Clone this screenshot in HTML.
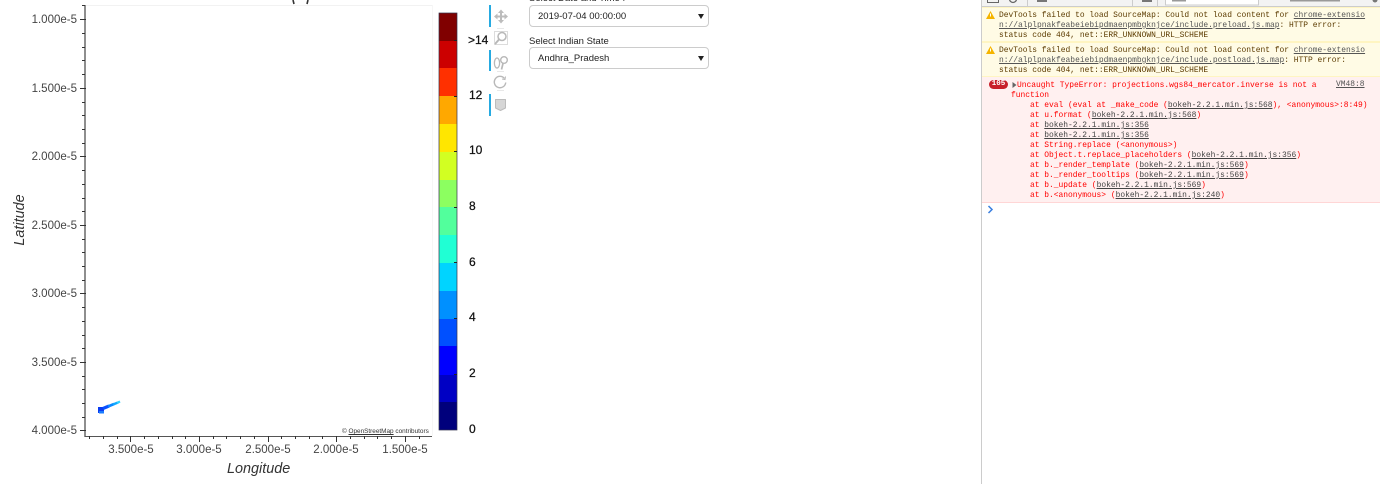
<!DOCTYPE html>
<html>
<head>
<meta charset="utf-8">
<style>
html,body{margin:0;padding:0;background:#fff;}
body{width:1380px;height:484px;overflow:hidden;position:relative;font-family:"Liberation Sans",sans-serif;}
.abs{position:absolute;white-space:nowrap;}
.yl{position:absolute;right:1303px;font-size:11.5px;color:#444;line-height:14px;white-space:nowrap;}
.xl{position:absolute;top:443px;width:80px;text-align:center;font-size:11.5px;color:#444;line-height:14px;}
.cb{position:absolute;left:469px;font-size:12px;color:#111;line-height:14px;text-align:left;white-space:nowrap;-webkit-text-stroke:.25px #111;}
.sel{position:absolute;left:529px;width:180px;height:22px;box-sizing:border-box;border:1px solid #ccc;border-radius:4px;background:#fff;font-size:9.5px;color:#222;line-height:22px;padding-left:8px;}
.sel i{position:absolute;right:4px;top:8px;width:0;height:0;border-left:3px solid transparent;border-right:3px solid transparent;border-top:5px solid #222;}
.con{position:absolute;left:982px;width:398px;font-family:"Liberation Mono","DejaVu Sans Mono",monospace;font-size:7.93px;line-height:10px;white-space:pre;}
.warn{background:#fffbe5;border-top:1px solid #fff5c2;border-bottom:1px solid #fff5c2;color:#5c3b00;box-sizing:border-box;}
.err{background:#fff0f0;color:#f00;box-sizing:border-box;border-bottom:1px solid #ffd6d6;}
.con u{color:#555;text-decoration:underline;}
.err u{color:#444;}
.tool{position:absolute;left:489px;width:2px;background:#26aae1;}
</style>
</head>
<body>

<!-- plot frame -->
<svg class="abs" style="left:0;top:0" width="480" height="484" viewBox="0 0 480 484">
  <rect x="86" y="5" width="346" height="1" fill="#f2f2f2"/>
  <rect x="432" y="5" width="1" height="431" fill="#f6f6f6"/>
  <line x1="85" y1="5" x2="85" y2="437" stroke="#444" stroke-width="1.2"/>
  <line x1="85" y1="436.5" x2="432" y2="436.5" stroke="#555" stroke-width="1.1"/>
  <path stroke="#333" stroke-width="1" fill="none" d="M80 19.5H86M80 88.5H86M80 156.5H86M80 225.5H86M80 293.5H86M80 362.5H86M80 430.5H86"/>
  <path stroke="#333" stroke-width="1" fill="none" d="M82 5.5H85M82 33.5H85M82 47.5H85M82 60.5H85M82 74.5H85M82 102.5H85M82 115.5H85M82 129.5H85M82 143.5H85M82 170.5H85M82 184.5H85M82 198.5H85M82 211.5H85M82 239.5H85M82 252.5H85M82 266.5H85M82 280.5H85M82 307.5H85M82 321.5H85M82 335.5H85M82 348.5H85M82 376.5H85M82 389.5H85M82 403.5H85M82 417.5H85"/>
  <path stroke="#333" stroke-width="1" fill="none" d="M130.5 436V442M199.5 436V442M268.5 436V442M336.5 436V442M405.5 436V442"/>
  <path stroke="#333" stroke-width="1" fill="none" d="M89.5 436V439M103.5 436V439M117.5 436V439M144.5 436V439M158.5 436V439M172.5 436V439M185.5 436V439M213.5 436V439M226.5 436V439M240.5 436V439M254.5 436V439M281.5 436V439M295.5 436V439M309.5 436V439M322.5 436V439M350.5 436V439M364.5 436V439M377.5 436V439M391.5 436V439M419.5 436V439"/>
  <!-- data -->
  <rect x="98" y="407" width="6" height="6" fill="#0a3cf0"/>
  <rect x="99" y="411" width="5" height="2.500" fill="#1a7cff"/>
  <path d="M103 408.500L109 406" stroke="#0a50ff" stroke-width="3.200" fill="none"/>
  <path d="M108 406.500L114 404" stroke="#0a88ff" stroke-width="2.800" fill="none"/>
  <path d="M113 404.500L118 402.500" stroke="#10a8ff" stroke-width="2.500" fill="none"/>
  <path d="M117 403L120 401.500" stroke="#30d0ff" stroke-width="2.200" fill="none"/>
  <!-- title fragment -->
  <path d="M293 0L294 4M308 0L307 4" stroke="#333" stroke-width="1.6"/>
  <!-- colorbar -->
  <g shape-rendering="crispEdges">
    <rect x="439" y="13" width="18" height="28" fill="#800000"/>
    <rect x="439" y="41" width="18" height="27" fill="#cc0000"/>
    <rect x="439" y="68" width="18" height="28" fill="#ff3000"/>
    <rect x="439" y="96" width="18" height="28" fill="#ffa800"/>
    <rect x="439" y="124" width="18" height="28" fill="#ffe600"/>
    <rect x="439" y="152" width="18" height="28" fill="#d2ff22"/>
    <rect x="439" y="180" width="18" height="27" fill="#8cff60"/>
    <rect x="439" y="207" width="18" height="28" fill="#52ff9c"/>
    <rect x="439" y="235" width="18" height="28" fill="#20ffd4"/>
    <rect x="439" y="263" width="18" height="28" fill="#00d4ff"/>
    <rect x="439" y="291" width="18" height="28" fill="#0090ff"/>
    <rect x="439" y="319" width="18" height="27" fill="#0050ff"/>
    <rect x="439" y="346" width="18" height="29" fill="#0000ff"/>
    <rect x="439" y="375" width="18" height="27" fill="#0000c4"/>
    <rect x="439" y="402" width="18" height="28" fill="#00007c"/>
  </g>
  <rect x="439" y="13" width="18" height="417" fill="none" stroke="#33334d" stroke-width=".7"/>
  <path stroke="#222" stroke-width="1" d="M454 40.500H457M454 96.500H457M454 151.500H457M454 207.500H457M454 262.500H457M454 318.500H457M454 374.500H457"/>
</svg>

<div class="yl" style="top:13px">1.000e-5</div>
<div class="yl" style="top:82px">1.500e-5</div>
<div class="yl" style="top:150px">2.000e-5</div>
<div class="yl" style="top:219px">2.500e-5</div>
<div class="yl" style="top:287px">3.000e-5</div>
<div class="yl" style="top:356px">3.500e-5</div>
<div class="yl" style="top:424px">4.000e-5</div>

<div class="xl" style="left:91px">3.500e-5</div>
<div class="xl" style="left:159px">3.000e-5</div>
<div class="xl" style="left:228px">2.500e-5</div>
<div class="xl" style="left:296px">2.000e-5</div>
<div class="xl" style="left:365px">1.500e-5</div>

<div class="abs" style="left:227px;top:461px;font-size:14.4px;font-style:italic;color:#333;line-height:16px">Longitude</div>
<div class="abs" style="left:-7px;top:212px;width:54px;text-align:center;font-size:14.4px;font-style:italic;color:#333;line-height:16px;transform:rotate(-90deg)">Latitude</div>

<div class="abs" style="left:342px;top:428px;font-size:6.4px;line-height:8px;color:#333;background:rgba(255,255,255,.8)">© <u>OpenStreetMap</u> contributors</div>

<div class="cb" style="top:33px;left:468px">&gt;14</div>
<div class="cb" style="top:88px">12</div>
<div class="cb" style="top:143px">10</div>
<div class="cb" style="top:199px">8</div>
<div class="cb" style="top:255px">6</div>
<div class="cb" style="top:310px">4</div>
<div class="cb" style="top:366px">2</div>
<div class="cb" style="top:422px">0</div>

<!-- toolbar -->
<div class="tool" style="top:5px;height:22px"></div>
<div class="tool" style="top:50px;height:21px"></div>
<div class="tool" style="top:94px;height:22px"></div>
<svg class="abs" style="left:492px;top:5px" width="20" height="112" viewBox="0 0 20 112">
  <!-- move -->
  <path fill="#bcbcbc" d="M9 4.500L6 8H8V10.500H5.500V8.500L2 11.500L5.500 14.500V12.500H8V15H6L9 18.500L12 15H10V12.500H12.500V14.500L16 11.500L12.500 8.500V10.500H10V8H12Z"/>
  <!-- box zoom -->
  <g fill="none" stroke="#b8b8b8">
    <rect x="2.500" y="26.500" width="13" height="13" stroke-dasharray="1 1"/>
    <circle cx="10" cy="31.500" r="4" stroke-width="1.500" fill="#fff"/>
    <path d="M7 34.500L3 39" stroke-width="2"/>
    <!-- wheel zoom -->
    <ellipse cx="5" cy="58" rx="2.600" ry="5" stroke-width="1.300"/>
    <circle cx="12" cy="55" r="3.300" stroke-width="1.400"/>
    <path d="M11 58.500L9.500 64.500" stroke-width="1.700"/>
    <!-- reset -->
    <path d="M12.500 73.500A5.700 5.700 0 1 0 13.700 77.500" stroke-width="1.400"/>
    <path d="M13.500 71.500L13 74.500L10 74" stroke-width="1"/>
  </g>
  <!-- hover -->
  <path d="M3.500 94.500H13.500V103L8.500 105.500L3.500 103Z" fill="#d6d6d6" stroke="#bcbcbc" stroke-linejoin="round"/>
  <rect x="5" y="23" width="7" height="1" fill="#e8e8e8"/>
  <rect x="5" y="66" width="7" height="1" fill="#e8e8e8"/>
  <rect x="5" y="85" width="7" height="1" fill="#e8e8e8"/>
</svg>

<!-- widgets -->
<div class="abs" style="left:529px;top:-7px;font-size:9.5px;line-height:12px;color:#222">Select Date and Time :</div>
<div class="sel" style="top:5px">2019-07-04 00:00:00<i></i></div>
<div class="abs" style="left:529px;top:36px;font-size:9.5px;line-height:12px;color:#222">Select Indian State</div>
<div class="sel" style="top:47px">Andhra_Pradesh<i></i></div>

<!-- devtools -->
<div class="abs" style="left:981px;top:0;width:1px;height:484px;background:#ccc"></div>
<div class="abs" style="left:982px;top:0;width:398px;height:6px;background:#f3f3f3;border-bottom:1px solid #ccc"></div>
<svg class="abs" style="left:982px;top:0" width="398" height="6">
  <rect x="5.500" y="-4.500" width="11" height="7" fill="none" stroke="#666"/>
  <circle cx="31" cy="-1" r="3.500" fill="none" stroke="#666" stroke-width="1.300"/>
  <path d="M45.500 0V6M150.500 0V6M175.500 0V6" stroke="#ccc"/>
  <rect x="183.500" y="-3" width="93" height="8" fill="#fff" stroke="#ccc"/>
  <rect x="55" y="0" width="10" height="2" fill="#777"/>
  <rect x="160" y="0" width="10" height="2" fill="#777"/>
  <rect x="190" y="0" width="14" height="1.500" fill="#999"/>
  <rect x="308" y="0" width="50" height="1.500" fill="#999"/>
  <circle cx="393" cy="0" r="2.500" fill="#777"/>
</svg>

<div class="con warn" style="top:7px;height:35px;padding:3px 0 0 17px">DevTools failed to load SourceMap: Could not load content for <u>chrome-extensio</u>
<u>n://alplpnakfeabeiebipdmaenpmbgknjce/include.preload.js.map</u>: HTTP error:
status code 404, net::ERR_UNKNOWN_URL_SCHEME</div>
<div class="con warn" style="top:42px;height:35px;padding:3px 0 0 17px">DevTools failed to load SourceMap: Could not load content for <u>chrome-extensio</u>
<u>n://alplpnakfeabeiebipdmaenpmbgknjce/include.postload.js.map</u>: HTTP error:
status code 404, net::ERR_UNKNOWN_URL_SCHEME</div>
<svg class="abs" style="left:986px;top:10px" width="10" height="46">
  <path d="M4.500 1L9 9H0Z" fill="#f5b400"/>
  <rect x="4" y="3.500" width="1" height="3" fill="#fff"/>
  <path d="M4.500 36L9 44H0Z" fill="#f5b400"/>
  <rect x="4" y="38.500" width="1" height="3" fill="#fff"/>
</svg>
<div class="con err" style="top:77px;height:126px;padding:4px 0 0 35px;"><span style="display:block">Uncaught TypeError: projections.wgs84_mercator.inverse is not a</span><span style="display:block;margin-left:-6px">function</span><span style="display:block;margin-left:13px">at eval (eval at _make_code (<u>bokeh-2.2.1.min.js:568</u>), &lt;anonymous&gt;:8:49)
at u.format (<u>bokeh-2.2.1.min.js:568</u>)
at <u>bokeh-2.2.1.min.js:356</u>
at <u>bokeh-2.2.1.min.js:356</u>
at String.replace (&lt;anonymous&gt;)
at Object.t.replace_placeholders (<u>bokeh-2.2.1.min.js:356</u>)
at b._render_template (<u>bokeh-2.2.1.min.js:569</u>)
at b._render_tooltips (<u>bokeh-2.2.1.min.js:569</u>)
at b._update (<u>bokeh-2.2.1.min.js:569</u>)
at b.&lt;anonymous&gt; (<u>bokeh-2.2.1.min.js:240</u>)</span></div>
<div class="abs" style="left:989px;top:80px;width:19px;height:9px;border-radius:5px;background:#c8202a;color:#fff;font-family:'Liberation Mono',monospace;font-size:7.500px;font-weight:700;line-height:9px;text-align:center">105</div>
<svg class="abs" style="left:1012px;top:82px" width="5" height="6"><path d="M0.500 0L4.500 3L0.500 6Z" fill="#666"/></svg>
<div class="abs" style="left:1336px;top:80px;font-family:'Liberation Mono',monospace;font-size:7.93px;line-height:10px;color:#555"><u>VM48:8</u></div>
<svg class="abs" style="left:987px;top:205px" width="8" height="9"><path d="M1.500 1L5 4.500L1.500 8" fill="none" stroke="#3a7fe0" stroke-width="1.500"/></svg>

</body>
</html>
